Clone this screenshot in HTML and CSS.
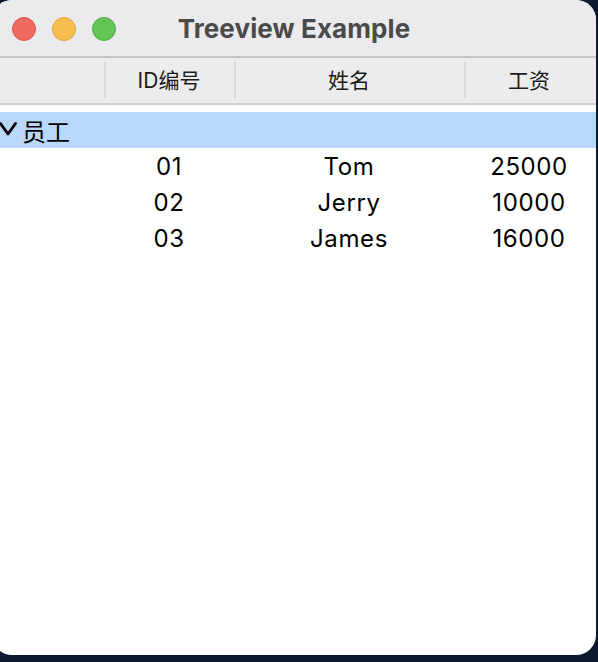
FILE: index.html
```html
<!DOCTYPE html>
<html lang="zh">
<head>
<meta charset="utf-8">
<title>Treeview Example</title>
<link rel="stylesheet" href="styles.css">
</head>
<body>
<div class="window">
  <div class="titlebar">
    <div class="lights">
      <span class="light red"></span>
      <span class="light yellow"></span>
      <span class="light green"></span>
    </div>
    <div class="title">Treeview Example</div>
    <div></div>
  </div>
  <div class="header grid">
    <div class="hcell"></div>
    <div class="hcell sep">ID编号</div>
    <div class="hcell sep">姓名</div>
    <div class="hcell sep">工资</div>
    <div class="hcell"></div>
  </div>
  <div class="body">
    <div class="row parent">
      <svg class="chev" width="18" height="14" viewBox="0 0 18 14"><polyline points="1.5,1.5 9,12 16.5,1.5" fill="none" stroke="#000" stroke-width="2.8" stroke-linecap="round" stroke-linejoin="round"/></svg>
      <span class="group">员工</span>
    </div>
    <div class="row grid">
      <div></div><div class="cell">01</div><div class="cell">Tom</div><div class="cell">25000</div><div></div>
    </div>
    <div class="row grid">
      <div></div><div class="cell">02</div><div class="cell">Jerry</div><div class="cell">10000</div><div></div>
    </div>
    <div class="row grid">
      <div></div><div class="cell">03</div><div class="cell">James</div><div class="cell">16000</div><div></div>
    </div>
  </div>
</div>
</body>
</html>
```

FILE: styles.css
```css
html, body {
  margin: 0;
  padding: 0;
  background: #0c1a2e;
  height: 662px;
  overflow: hidden;
}
.window {
  margin-left: -8px;
  width: 604px;
  height: 655px;
  border-radius: 20px;
  background: #ffffff;
  overflow: hidden;
  font-family: "Inter", "Noto Sans CJK SC", sans-serif;
  color: #000;
}
.titlebar {
  height: 56px;
  background: #ebebed;
  border-bottom: 2px solid #c6c6c6;
  display: grid;
  grid-template-columns: 1fr auto 1fr;
  align-items: center;
}
.lights {
  display: flex;
  gap: 16px;
  padding-left: 20px;
  padding-top: 1px;
}
.light {
  width: 22px;
  height: 22px;
  border-radius: 50%;
  box-sizing: content-box;
  border: 1px solid;
}
.red { background: #ee6a5f; border-color: #d6574d; }
.yellow { background: #f5be4f; border-color: #dea33a; }
.green { background: #62c554; border-color: #4fad43; }
.title {
  font-weight: 700;
  font-size: 26px;
  color: #4a4a4a;
  letter-spacing: 0.1px;
}
.grid {
  display: grid;
  grid-template-columns: 112px 130px 230px 130px 1fr;
}
.header {
  height: 45px;
  background: #ececec;
  border-bottom: 2px solid #cecece;
}
.hcell {
  position: relative;
  display: flex;
  align-items: center;
  justify-content: center;
  font-size: 21px;
  color: #1a1a1a;
  padding-bottom: 4px;
}
.hcell.sep::before {
  content: "";
  position: absolute;
  left: 0;
  top: 4px;
  bottom: 5px;
  width: 2px;
  background: #d9d9d9;
}
.body {
  padding-top: 7px;
}
.row {
  height: 36px;
}
.parent {
  background: #b9d7fb;
  display: flex;
  align-items: center;
  padding-left: 7px;
  gap: 5px;
}
.chev {
  display: block;
  margin-top: -2px;
}
.group {
  font-size: 24px;
}
.cell {
  display: flex;
  align-items: center;
  justify-content: center;
  font-size: 24px;
  letter-spacing: 0.6px;
}
```
